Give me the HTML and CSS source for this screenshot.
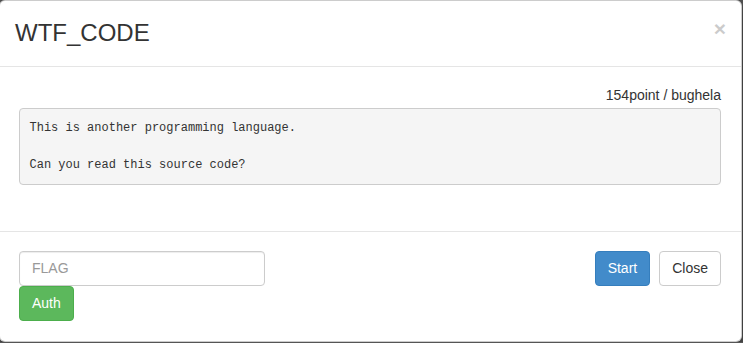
FILE: index.html
```html
<!DOCTYPE html>
<html lang="en">
<head>
  <meta charset="UTF-8">
  <meta name="viewport" content="width=device-width, initial-scale=1.0">
  <title>WTF_CODE</title>
  <link rel="stylesheet" href="styles.css">
</head>
<body>
  <div class="modal-content">
    <div class="modal-header">
      <button class="close" type="button">&times;</button>
      <h4 class="modal-title">WTF_CODE</h4>
    </div>
    <div class="modal-body">
      <div class="author">154point / bughela</div>
      <pre class="desc">This is another programming language.

Can you read this source code?</pre>
    </div>
    <div class="modal-footer">
      <form class="auth-form">
        <input class="form-control" type="text" placeholder="FLAG">
        <button class="btn btn-success" type="button">Auth</button>
      </form>
      <div class="actions">
        <button class="btn btn-primary" type="button">Start</button>
        <button class="btn btn-default" type="button">Close</button>
      </div>
    </div>
  </div>
</body>
</html>
```

FILE: styles.css
```css
body {
  margin: 0;
  background-color: #555;
  font-family: "Liberation Sans", Arial, sans-serif;
  font-size: 14px;
  line-height: 1.42857;
  color: #333;
  overflow: hidden;
}
.modal-content {
  box-sizing: border-box;
  width: 743px;
  margin-left: -1px;
  background-color: #fff;
  border: 1px solid rgba(0, 0, 0, 0.2);
  border-radius: 6px;
  box-shadow: 0 5px 15px rgba(0, 0, 0, 0.5);
}
.modal-header {
  padding: 15px 15px 16px;
  border-bottom: 1px solid #e5e5e5;
}
.modal-title {
  margin: 0;
  font-size: 24px;
  font-weight: normal;
  line-height: 1.42857;
}
.close {
  float: right;
  margin-top: 2px;
  padding: 0;
  background: transparent;
  border: 0;
  font-family: "Liberation Sans", Arial, sans-serif;
  font-size: 21px;
  font-weight: bold;
  line-height: 1;
  color: #000;
  opacity: 0.2;
  cursor: pointer;
}
.modal-body {
  padding: 18px 20px 36px 19px;
}
.author {
  text-align: right;
  line-height: 20px;
}
.desc {
  margin: 3px 0 10px;
  padding: 9.5px;
  font-family: "Liberation Mono", monospace;
  font-size: 12px;
  line-height: 18.57px;
  color: #333;
  background-color: #f5f5f5;
  border: 1px solid #ccc;
  border-radius: 4px;
  white-space: pre-wrap;
}
.modal-footer {
  display: flex;
  justify-content: space-between;
  align-items: flex-start;
  padding: 19px 20px 20px 19px;
  border-top: 1px solid #e5e5e5;
}
.auth-form {
  display: flex;
  flex-direction: column;
  align-items: flex-start;
  margin: 0;
}
.form-control {
  box-sizing: border-box;
  width: 246px;
  height: 35px;
  padding: 6px 12px;
  font-family: "Liberation Sans", Arial, sans-serif;
  font-size: 14px;
  color: #555;
  background-color: #fff;
  border: 1px solid #ccc;
  border-radius: 4px;
  box-shadow: inset 0 1px 1px rgba(0, 0, 0, 0.075);
}
.form-control::placeholder {
  color: #999;
}
.actions {
  display: flex;
  gap: 9px;
}
.btn {
  padding: 6px 12px;
  font-family: "Liberation Sans", Arial, sans-serif;
  font-size: 14px;
  line-height: 21px;
  border: 1px solid transparent;
  border-radius: 4px;
  cursor: pointer;
}
.btn-success {
  color: #fff;
  background-color: #5cb85c;
  border-color: #4cae4c;
}
.btn-primary {
  color: #fff;
  background-color: #428bca;
  border-color: #357ebd;
}
.btn-default {
  color: #333;
  background-color: #fff;
  border-color: #ccc;
}
```
